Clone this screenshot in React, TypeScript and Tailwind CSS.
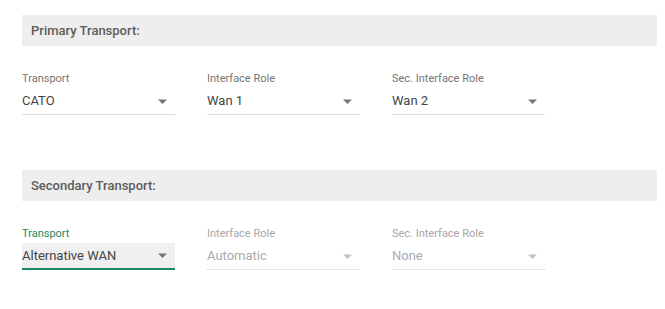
const fields = {
  primary: [
    { label: 'Transport', value: 'CATO' },
    { label: 'Interface Role', value: 'Wan 1' },
    { label: 'Sec. Interface Role', value: 'Wan 2' },
  ],
  secondary: [
    { label: 'Transport', value: 'Alternative WAN', focused: true },
    { label: 'Interface Role', value: 'Automatic', disabled: true },
    { label: 'Sec. Interface Role', value: 'None', disabled: true },
  ],
}

function Arrow({ disabled }: { disabled?: boolean }) {
  return (
    <svg width="9" height="5" viewBox="0 0 9 5" className="mr-[8px]">
      <path d="M0 0.5 L9 0.5 L4.5 5 Z" fill={disabled ? '#c4c4c4' : '#757575'} />
    </svg>
  )
}

function SelectField({ label, value, focused, disabled }: { label: string; value: string; focused?: boolean; disabled?: boolean }) {
  const labelColor = focused ? 'text-[#178a63]' : disabled ? 'text-[#a6a6a6]' : 'text-[#757575]'
  const valueColor = disabled ? 'text-[#ababab]' : 'text-[#444444]'
  let line = 'border-b border-[#dcdcdc]'
  if (focused) line = 'border-b-2 border-[#178a63] bg-[#f0f0f0]'
  if (disabled) line = 'border-b border-dotted border-[#cfcfcf]'
  return (
    <div className="w-[153px]">
      <div className={`text-[11px] leading-[14px] ${labelColor}`}>{label}</div>
      <div className={`mt-[2px] h-[27px] flex items-center justify-between ${line}`}>
        <span className={`text-[13px] leading-[16px] ${valueColor}`}>{value}</span>
        <Arrow disabled={disabled} />
      </div>
    </div>
  )
}

function Section({ title, items }: { title: string; items: any[] }) {
  return (
    <div>
      <div className="h-[31px] bg-[#eeeeee] flex items-center px-[9px]">
        <span className="text-[13px] font-medium text-[#5c5c5c]">{title}</span>
      </div>
      <div className="mt-[26px] flex gap-[32px]">
        {items.map(f => (
          <SelectField key={f.label} {...f} />
        ))}
      </div>
    </div>
  )
}

export default function App() {
  return (
    <div className="w-[665px] h-[309px] bg-white pt-[15px] pl-[22px] pr-[8px]" style={{ fontFamily: 'Roboto, sans-serif' }}>
      <Section title="Primary Transport:" items={fields.primary} />
      <div className="h-[55px]" />
      <Section title="Secondary Transport:" items={fields.secondary} />
    </div>
  )
}
